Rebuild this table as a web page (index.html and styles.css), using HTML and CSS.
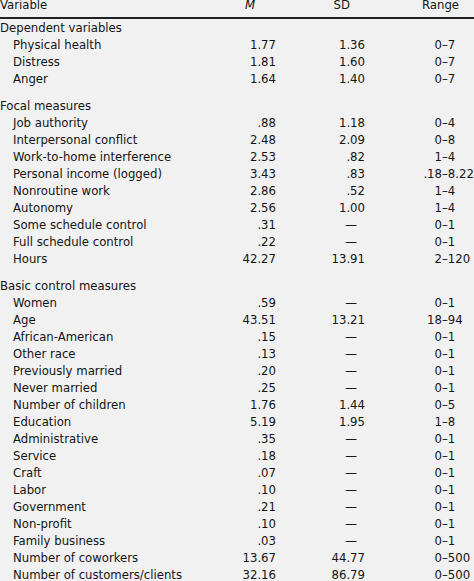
FILE: index.html
```html
<!DOCTYPE html>
<html>
<head>
<meta charset="utf-8">
<link rel="stylesheet" href="styles.css">
</head>
<body>
<table class="stats">
<colgroup><col class="c-var"><col class="c-m"><col class="c-sd"><col class="c-rg"></colgroup>
<thead>
<tr><th class="h-var">Variable</th><th class="h-m"><i>M</i></th><th class="h-sd">SD</th><th class="h-rg">Range</th></tr>
</thead>
<tbody>
<tr class="grp first"><td colspan="4">Dependent variables</td></tr>
<tr><td class="item">Physical health</td><td class="num">1.77</td><td class="num">1.36</td><td class="rg"><span class="lo">0</span>–<span class="hi">7</span></td></tr>
<tr><td class="item">Distress</td><td class="num">1.81</td><td class="num">1.60</td><td class="rg"><span class="lo">0</span>–<span class="hi">7</span></td></tr>
<tr><td class="item">Anger</td><td class="num">1.64</td><td class="num">1.40</td><td class="rg"><span class="lo">0</span>–<span class="hi">7</span></td></tr>

<tr class="grp"><td colspan="4">Focal measures</td></tr>
<tr><td class="item">Job authority</td><td class="num">.88</td><td class="num">1.18</td><td class="rg"><span class="lo">0</span>–<span class="hi">4</span></td></tr>
<tr><td class="item">Interpersonal conflict</td><td class="num">2.48</td><td class="num">2.09</td><td class="rg"><span class="lo">0</span>–<span class="hi">8</span></td></tr>
<tr><td class="item">Work-to-home interference</td><td class="num">2.53</td><td class="num">.82</td><td class="rg"><span class="lo">1</span>–<span class="hi">4</span></td></tr>
<tr><td class="item">Personal income (logged)</td><td class="num">3.43</td><td class="num">.83</td><td class="rg"><span class="lo">.18</span>–<span class="hi">8.22</span></td></tr>
<tr><td class="item">Nonroutine work</td><td class="num">2.86</td><td class="num">.52</td><td class="rg"><span class="lo">1</span>–<span class="hi">4</span></td></tr>
<tr><td class="item">Autonomy</td><td class="num">2.56</td><td class="num">1.00</td><td class="rg"><span class="lo">1</span>–<span class="hi">4</span></td></tr>
<tr><td class="item">Some schedule control</td><td class="num">.31</td><td class="num dash">—</td><td class="rg"><span class="lo">0</span>–<span class="hi">1</span></td></tr>
<tr><td class="item">Full schedule control</td><td class="num">.22</td><td class="num dash">—</td><td class="rg"><span class="lo">0</span>–<span class="hi">1</span></td></tr>
<tr><td class="item">Hours</td><td class="num">42.27</td><td class="num">13.91</td><td class="rg"><span class="lo">2</span>–<span class="hi">120</span></td></tr>

<tr class="grp"><td colspan="4">Basic control measures</td></tr>
<tr><td class="item">Women</td><td class="num">.59</td><td class="num dash">—</td><td class="rg"><span class="lo">0</span>–<span class="hi">1</span></td></tr>
<tr><td class="item">Age</td><td class="num">43.51</td><td class="num">13.21</td><td class="rg"><span class="lo">18</span>–<span class="hi">94</span></td></tr>
<tr><td class="item">African-American</td><td class="num">.15</td><td class="num dash">—</td><td class="rg"><span class="lo">0</span>–<span class="hi">1</span></td></tr>
<tr><td class="item">Other race</td><td class="num">.13</td><td class="num dash">—</td><td class="rg"><span class="lo">0</span>–<span class="hi">1</span></td></tr>
<tr><td class="item">Previously married</td><td class="num">.20</td><td class="num dash">—</td><td class="rg"><span class="lo">0</span>–<span class="hi">1</span></td></tr>
<tr><td class="item">Never married</td><td class="num">.25</td><td class="num dash">—</td><td class="rg"><span class="lo">0</span>–<span class="hi">1</span></td></tr>
<tr><td class="item">Number of children</td><td class="num">1.76</td><td class="num">1.44</td><td class="rg"><span class="lo">0</span>–<span class="hi">5</span></td></tr>
<tr><td class="item">Education</td><td class="num">5.19</td><td class="num">1.95</td><td class="rg"><span class="lo">1</span>–<span class="hi">8</span></td></tr>
<tr><td class="item">Administrative</td><td class="num">.35</td><td class="num dash">—</td><td class="rg"><span class="lo">0</span>–<span class="hi">1</span></td></tr>
<tr><td class="item">Service</td><td class="num">.18</td><td class="num dash">—</td><td class="rg"><span class="lo">0</span>–<span class="hi">1</span></td></tr>
<tr><td class="item">Craft</td><td class="num">.07</td><td class="num dash">—</td><td class="rg"><span class="lo">0</span>–<span class="hi">1</span></td></tr>
<tr><td class="item">Labor</td><td class="num">.10</td><td class="num dash">—</td><td class="rg"><span class="lo">0</span>–<span class="hi">1</span></td></tr>
<tr><td class="item">Government</td><td class="num">.21</td><td class="num dash">—</td><td class="rg"><span class="lo">0</span>–<span class="hi">1</span></td></tr>
<tr><td class="item">Non-profit</td><td class="num">.10</td><td class="num dash">—</td><td class="rg"><span class="lo">0</span>–<span class="hi">1</span></td></tr>
<tr><td class="item">Family business</td><td class="num">.03</td><td class="num dash">—</td><td class="rg"><span class="lo">0</span>–<span class="hi">1</span></td></tr>
<tr><td class="item">Number of coworkers</td><td class="num">13.67</td><td class="num">44.77</td><td class="rg"><span class="lo">0</span>–<span class="hi">500</span></td></tr>
<tr><td class="item">Number of customers/clients</td><td class="num">32.16</td><td class="num">86.79</td><td class="rg"><span class="lo">0</span>–<span class="hi">500</span></td></tr>
</tbody>
</table>
</body>
</html>
```

FILE: styles.css
```css
html, body {
  margin: 0;
  padding: 0;
  background: #f1f1f1;
  overflow: hidden;
}

body {
  width: 474px;
  height: 581px;
}

.stats {
  margin-top: -4px;
  border-collapse: separate;
  border-spacing: 0;
  table-layout: fixed;
  width: 500px;
  font-family: "DejaVu Sans Condensed", "DejaVu Sans", sans-serif;
  font-stretch: condensed;
  font-size: 13px;
  color: #141414;
}

.c-var { width: 200px; }
.c-m { width: 76px; }
.c-sd { width: 89px; }
.c-rg { width: 135px; }

.stats th,
.stats td {
  padding: 0;
  height: 17px;
  line-height: 17px;
  white-space: nowrap;
  font-weight: normal;
  vertical-align: top;
}

.stats th {
  padding-bottom: 4px;
  border-bottom: 2px solid #222;
}

.h-var { text-align: left; }
.h-m { text-align: right; padding-right: 21px !important; }
.h-sd { text-align: right; padding-right: 15px !important; }
.h-rg { text-align: left; padding-left: 57px !important; }

.grp td {
  padding-top: 10px;
}

.grp.first td {
  padding-top: 0;
}

.item {
  padding-left: 13px !important;
}

.num {
  text-align: right;
}

.dash {
  padding-right: 8px !important;
}

.lo {
  display: inline-block;
  width: 77px;
  text-align: right;
}

.hi {
  display: inline-block;
}
```
